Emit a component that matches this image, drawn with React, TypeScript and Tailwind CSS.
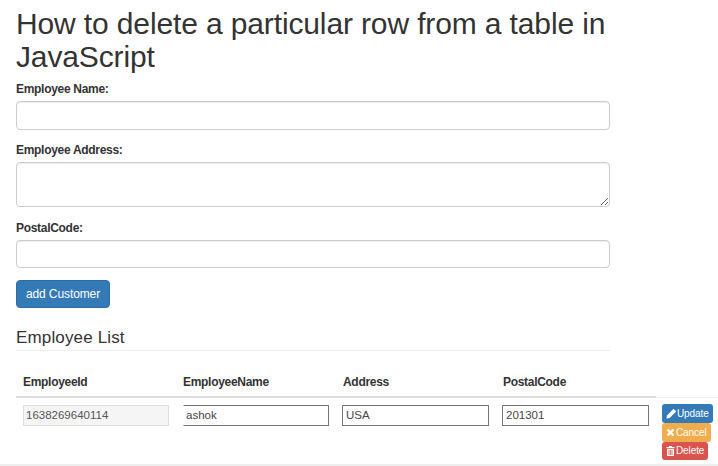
import type { ReactNode } from 'react'

const labelClass = 'block text-[12px] leading-[17px] font-bold tracking-[-0.3px] text-[#333]'
const fieldClass = 'block w-full rounded-[4px] border border-[#ccc] bg-white shadow-[inset_0_1px_1px_rgba(0,0,0,0.075)]'
const cellInput = 'block h-[21px] border border-[#767676] bg-white pb-[1px] text-[11.5px] text-[#444]'
const colClass = 'w-[160px] shrink-0'

function ActionButton({ color, icon, label }: { color: string; icon: ReactNode; label: string }) {
    return (
        <button className={`flex items-center rounded-[3px] pl-[4px] pr-[4px] text-[10px] leading-none tracking-[-0.1px] text-white ${color}`}>
            {icon}
            {label}
        </button>
    )
}

const PencilIcon = (
    <svg width="11" height="11" viewBox="0 0 11 11" fill="white">
        <path d="M7.6 0.8 10.2 3.4 3.6 10 0.4 10.6 1 7.4Z" />
    </svg>
)

const CrossIcon = (
    <svg width="9" height="9" viewBox="0 0 9 9" fill="none" stroke="white" strokeWidth="2.4" className="mr-[1px]">
        <path d="M1.5 1.5 7.5 7.5M7.5 1.5 1.5 7.5" />
    </svg>
)

const TrashIcon = (
    <svg width="9" height="10" viewBox="0 0 9 10" fill="white" className="mr-[1px]">
        <path d="M3 0H6V1H8.5V2.2H0.5V1H3Z" />
        <path d="M1 3H8V10H1ZM2.6 4V9H3.4V4ZM4.1 4V9H4.9V4ZM5.6 4V9H6.4V4Z" fillRule="evenodd" />
    </svg>
)

export default function App() {
    return (
        <div className="h-[466px] w-[718px] overflow-hidden bg-white pt-[7px] font-['Liberation_Sans',Arial,sans-serif] text-[#333]">
            <div className="w-[610px] pl-[16px]">
                <h1 className="-mr-[4px] text-[30px] leading-[33px] font-normal tracking-[-0.13px]">How to delete a particular row from a table in JavaScript</h1>

                <label className={`${labelClass} mt-[8px]`}>Employee Name:</label>
                <input className={`${fieldClass} mt-[3px] h-[29px]`} />

                <label className={`${labelClass} mt-[12px]`}>Employee Address:</label>
                <textarea className={`${fieldClass} mt-[3px] h-[45px]`} />

                <label className={`${labelClass} mt-[13px]`}>PostalCode:</label>
                <input className={`${fieldClass} mt-[3px] h-[28px]`} />

                <button className="mt-[12px] block h-[28px] w-[94px] rounded-[4px] border border-[#2e6da4] bg-[#337ab7] text-[12px] tracking-[-0.1px] text-white">add Customer</button>

                <div className="mt-[20px] border-b border-[#eee] pb-[2px] text-[17px] leading-[20px] tracking-[0.15px] text-[#333]">Employee List</div>
            </div>

            <div className="mt-[18px]">
                <div className="ml-[16px] h-[29px] border-b border-[#eee]">
                    <div className="flex h-[29px] w-[640px] items-start border-b-2 border-[#ddd] pl-[7px] pt-[5px] text-[12px] leading-[17px] font-bold tracking-[-0.3px]">
                        <div className={colClass}>EmployeeId</div>
                        <div className={colClass}>EmployeeName</div>
                        <div className={colClass}>Address</div>
                        <div className={colClass}>PostalCode</div>
                    </div>
                </div>
                <div className="flex h-[68px] border-b-2 border-[#eee] pl-[23px] pt-[7px]">
                    <div className={colClass}>
                        <input readOnly value="1638269640114" className="block h-[21px] w-[146px] border border-[#ddd] bg-[#f5f5f5] px-[2px] pb-[1px] text-[11.5px] text-[#555]" />
                    </div>
                    <div className={colClass}>
                        <input readOnly value="ashok" className={`${cellInput} w-[146px] border-l-transparent px-[2px]`} />
                    </div>
                    <div className={colClass}>
                        <input readOnly value="USA" className={`${cellInput} -ml-[1px] w-[147px] px-[3px]`} />
                    </div>
                    <div className={colClass}>
                        <input readOnly value="201301" className={`${cellInput} -ml-[1px] w-[147px] px-[3px]`} />
                    </div>
                    <div className="-ml-[1px] -mt-[1px] grid shrink-0 grid-rows-[19px_19px_18px] justify-items-start">
                        <ActionButton color="bg-[#337ab7]" label="Update" icon={PencilIcon} />
                        <ActionButton color="bg-[#f0ad4e]" label="Cancel" icon={CrossIcon} />
                        <ActionButton color="bg-[#d9534f]" label="Delete" icon={TrashIcon} />
                    </div>
                </div>
            </div>
        </div>
    )
}
